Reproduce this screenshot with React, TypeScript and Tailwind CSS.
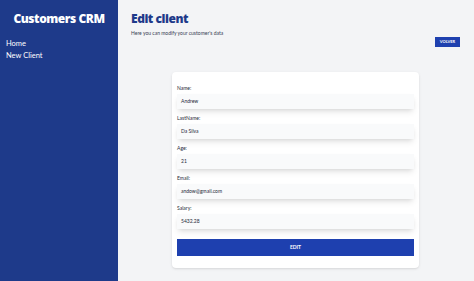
import React from 'react';

const fields = [
  { label: 'Name:', value: 'Andrew' },
  { label: 'LastName:', value: 'Da Silva' },
  { label: 'Age:', value: '21' },
  { label: 'Email:', value: 'andow@gmail.com' },
  { label: 'Salary:', value: '5432.28' },
];

const App: React.FC = () => {
  return (
    <div className="flex h-screen w-full font-['Lato',sans-serif] text-gray-800">
      {/* Sidebar */}
      <aside className="w-[118px] shrink-0 bg-[#1e3a8a] text-white">
        <h2 className="pt-[10px] text-center font-['Noto_Sans',sans-serif] text-[12px] leading-[18px] font-black tracking-[-0.45px]">
          Customers CRM
        </h2>
        <nav className="mt-[10px] flex flex-col px-[6px] text-[7.5px] leading-[12px]">
          <a href="#">Home</a>
          <a href="#">New Client</a>
        </nav>
      </aside>

      {/* Main */}
      <main className="flex-1 bg-gray-100 pl-[13px] pr-[14px] pt-[10px]">
        <h1 className="font-['Noto_Sans',sans-serif] text-[12px] leading-[18px] font-black tracking-[-0.45px] text-[#1e3a8a]">
          Edit client
        </h1>
        <p className="mt-[2px] text-[5px] leading-[6px] text-gray-700">
          Here you can modify your customer's data
        </p>

        <div className="mt-[1px] flex justify-end">
          <button className="h-[10px] w-[25px] bg-[#1e40af] text-[4px] font-bold uppercase text-white">
            Volver
          </button>
        </div>

        {/* Card */}
        <div className="mx-auto mt-[25px] w-[247px] rounded-sm bg-white px-[5px] pt-[13px] pb-[12px] shadow">
          <form className="flex flex-col gap-[6px]">
            {fields.map((f) => (
              <div key={f.label}>
                <label className="mb-[2px] block text-[5px] leading-[7px] text-gray-800">
                  {f.label}
                </label>
                <div className="flex h-[15px] items-center bg-gray-50 px-[4px] text-[5px] text-gray-800 shadow-md">
                  {f.value}
                </div>
              </div>
            ))}
          </form>
          <button className="mt-[10px] flex h-[17px] w-full items-center justify-center bg-[#1e40af] text-[5px] font-bold uppercase text-white">
            Edit
          </button>
        </div>
      </main>
    </div>
  );
};

export default App;
